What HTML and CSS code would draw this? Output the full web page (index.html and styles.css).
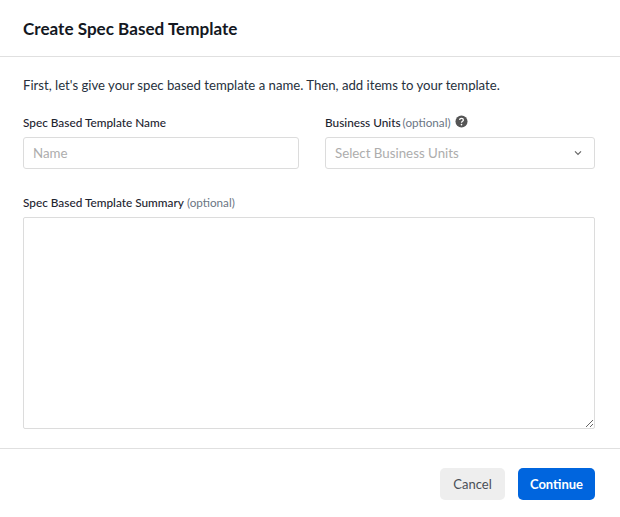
FILE: index.html
```html
<!DOCTYPE html>
<html lang="en">

<head>
    <meta charset="UTF-8">
    <meta name="viewport" content="width=device-width, initial-scale=1.0">
    <title>Create Spec Based Template</title>
    <link rel="stylesheet" href="styles.css">
</head>

<body>
    <div class="modal">
        <div class="modal-header">
            <h1>Create Spec Based Template</h1>
        </div>

        <div class="modal-body">
            <p class="intro">First, let's give your spec based template a name. Then, add items to your template.</p>

            <div class="form-row">
                <div class="field field-name">
                    <label class="field-label" for="templateName">Spec Based Template Name</label>
                    <input class="text-input" id="templateName" type="text" placeholder="Name">
                </div>

                <div class="field">
                    <div class="field-label units-label">
                        <span>Business Units</span>
                        <span class="optional">(optional)</span>
                        <svg class="help-icon" viewBox="0 0 14 14" width="13" height="13" aria-hidden="true">
                            <circle cx="7" cy="7" r="6.5" fill="#555"></circle>
                            <path d="M5 5.4C5 4.3 5.9 3.6 7 3.6s2 .7 2 1.7c0 1.5-2 1.5-2 3" fill="none" stroke="#fff" stroke-width="1.4"></path>
                            <circle cx="7" cy="10.3" r=".9" fill="#fff"></circle>
                        </svg>
                    </div>
                    <div class="select-box">
                        <span>Select Business Units</span>
                        <svg viewBox="0 0 8 6" width="8" height="6" aria-hidden="true">
                            <path d="M1 1.3l3 3 3-3" fill="none" stroke="#666" stroke-width="1.2"></path>
                        </svg>
                    </div>
                </div>
            </div>

            <label class="field-label summary-label" for="summary">
                <span>Spec Based Template Summary</span>
                <span class="optional">(optional)</span>
            </label>
            <textarea class="summary-input" id="summary"></textarea>
        </div>

        <div class="modal-footer">
            <button class="btn btn-cancel">Cancel</button>
            <button class="btn btn-primary">Continue</button>
        </div>
    </div>
</body>
</html>
```

FILE: styles.css
```css
* {
    box-sizing: border-box;
}

body {
    margin: 0;
    background: #fff;
    color: #1d2733;
    font-family: "Lato", "Open Sans", sans-serif;
}

.modal {
    width: 620px;
    height: 517px;
    display: flex;
    flex-direction: column;
}

.modal-header {
    height: 57px;
    padding: 0 25px 0 23px;
    display: flex;
    align-items: center;
    border-bottom: 1px solid #e0e0e0;
}

h1 {
    margin: 0;
    font-size: 17.1px;
    font-weight: 700;
    color: #14181f;
}

.modal-body {
    height: 392px;
    padding: 20px 25px 0 23px;
    border-bottom: 1px solid #e0e0e0;
}

.intro {
    margin: 0 0 21px;
    font-size: 13.17px;
    line-height: 16px;
    color: #27313d;
}

.form-row {
    display: flex;
    gap: 26px;
}

.field {
    flex: 1;
}

.field-name {
    flex: none;
    width: 276px;
}

.field-label {
    display: flex;
    align-items: center;
    gap: 3px;
    height: 16px;
    margin-bottom: 7px;
    font-size: 11.8px;
    font-weight: 500;
    color: #1d2430;
}

.units-label {
    gap: 2px;
}

.optional {
    font-size: 11.7px;
    font-weight: 400;
    color: #6b7684;
}

.help-icon {
    margin-left: 2px;
    margin-top: -2px;
}

.text-input,
.select-box {
    width: 100%;
    height: 32px;
    border: 1px solid #dcdcdc;
    border-radius: 3px;
    background: #fff;
    font-family: inherit;
    font-size: 13.3px;
    color: #adadad;
}

.text-input {
    padding: 0 9px;
    outline: none;
}

.text-input::placeholder {
    color: #adadad;
}

.select-box {
    padding: 0 12px 0 9px;
    display: flex;
    align-items: center;
    justify-content: space-between;
}

.summary-label {
    margin-top: 25px;
    margin-bottom: 7px;
}

.summary-input {
    display: block;
    width: 572px;
    height: 212px;
    border: 1px solid #dcdcdc;
    border-radius: 2px;
    outline: none;
    resize: vertical;
}

.modal-footer {
    flex: 1;
    padding: 19px 25px 0 0;
    display: flex;
    justify-content: flex-end;
    align-items: flex-start;
    gap: 13px;
}

.btn {
    height: 32px;
    border: none;
    border-radius: 5px;
    font-family: inherit;
    font-size: 13px;
}

.btn-cancel {
    width: 65px;
    background: #eeeeee;
    color: #4a4f57;
}

.btn-primary {
    width: 77px;
    background: #0065de;
    color: #fff;
    font-weight: 700;
}
```
